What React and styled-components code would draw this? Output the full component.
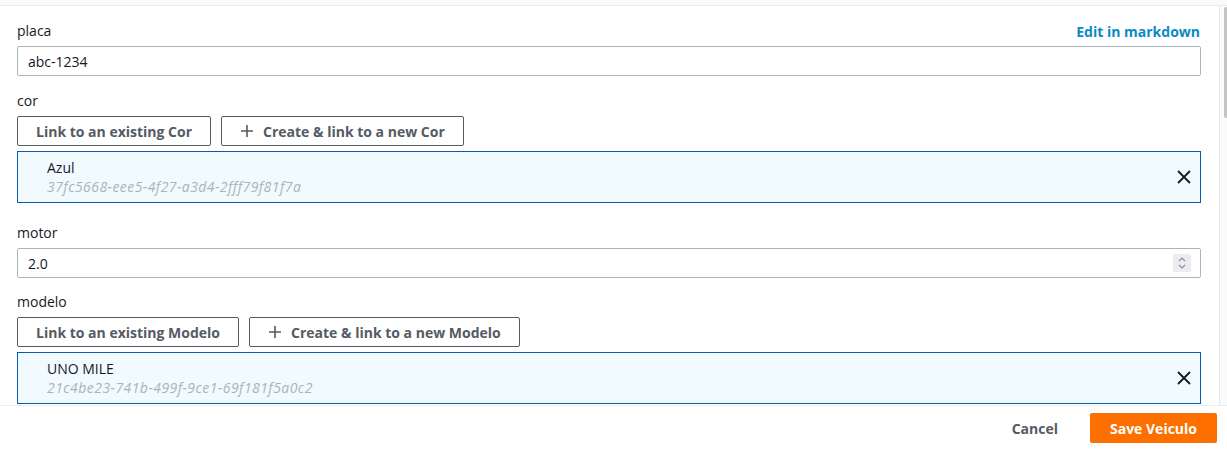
import React from "react";
import styled, { createGlobalStyle } from "styled-components";

const Global = createGlobalStyle`
  html, body { margin: 0; padding: 0; background: #fff; }
  body { font-family: "Open Sans", Roboto, Arial, sans-serif; color: #16191f; }
  * { box-sizing: border-box; }
`;

const Page = styled.div`
  width: 1227px;
  height: 453px;
  display: flex;
  flex-direction: column;
  overflow: hidden;
  background: #fff;
`;

const TopStrip = styled.div`
  height: 6px;
  flex: none;
  background: #fafafa;
  border-bottom: 1px solid #eaeded;
`;

const Middle = styled.div`
  height: 400px;
  flex: none;
  display: flex;
  border-bottom: 1px solid #eaeded;
`;

const FormArea = styled.div`
  flex: 1;
  overflow: hidden;
  padding: 16px 18px 0 17px;
  display: flex;
  flex-direction: column;
`;

const Rail = styled.div`
  width: 8px;
  flex: none;
  background: #fafafa;
  border-left: 1px solid #e6e6e6;
  display: flex;
  justify-content: flex-end;
  padding-top: 1px;
`;

const Thumb = styled.div`
  width: 3px;
  height: 111px;
  background: #c4c4c4;
  border-radius: 2px 0 0 2px;
`;

const Field = styled.div`
  display: flex;
  flex-direction: column;
  margin-bottom: ${(p) => p.$mb || 15}px;
`;

const LabelRow = styled.div`
  display: flex;
  justify-content: space-between;
  align-items: center;
  height: 18px;
  margin-bottom: 6px;
`;

const Label = styled.label`
  font-size: 14px;
  color: #16191f;
  line-height: 18px;
`;

const MarkdownLink = styled.a`
  font-size: 14px;
  font-weight: 700;
  color: #0a8bc4;
  text-decoration: none;
  margin-right: 1px;
`;

const InputBox = styled.div`
  height: 30px;
  border: 1px solid #aab7b8;
  border-radius: 2px;
  display: flex;
  align-items: center;
  padding: 0 9px 0 10px;
  font-size: 14px;
  color: #16191f;
`;

const InputText = styled.span`
  flex: 1;
`;

const Spinner = styled.div`
  width: 18px;
  height: 18px;
  background: #ebebf0;
  border-radius: 2px;
  display: flex;
  align-items: center;
  justify-content: center;
`;

const ButtonRow = styled.div`
  display: flex;
  gap: 10px;
  margin-bottom: 5px;
`;

const OutlineButton = styled.button`
  height: 30px;
  padding: 0 18px;
  border: 1px solid #545b64;
  border-radius: 2px;
  background: #fff;
  color: #545b64;
  font-family: inherit;
  font-size: 14px;
  font-weight: 700;
  display: flex;
  align-items: center;
  gap: 9px;
  cursor: pointer;
`;

const Card = styled.div`
  height: 52px;
  background: #f1faff;
  border: 1px solid #0a5bb0;
  display: flex;
  align-items: center;
  padding: 0 8px 0 29px;
`;

const CardText = styled.div`
  flex: 1;
  display: flex;
  flex-direction: column;
`;

const CardTitle = styled.div`
  font-size: 14px;
  line-height: 18px;
  color: #16191f;
`;

const CardId = styled.div`
  font-size: 14px;
  line-height: 19px;
  font-style: italic;
  letter-spacing: 0.45px;
  color: #a9b5b6;
`;

const Footer = styled.div`
  flex: 1;
  display: flex;
  align-items: center;
  justify-content: flex-end;
  padding: 0 10px 3px 0;
  gap: 24px;
`;

const CancelButton = styled.button`
  border: none;
  background: none;
  font-family: inherit;
  font-size: 14px;
  font-weight: 700;
  color: #545b64;
  padding: 0 8px;
  cursor: pointer;
`;

const PrimaryButton = styled.button`
  height: 30px;
  width: 127px;
  border: none;
  border-radius: 2px;
  background: #fd7000;
  color: #fff;
  font-family: inherit;
  font-size: 14px;
  font-weight: 700;
  cursor: pointer;
`;

const PlusIcon = () => (
  <svg width="14" height="14" viewBox="0 0 14 14">
    <path d="M7 1v12M1 7h12" stroke="#545b64" strokeWidth="1.6" fill="none" />
  </svg>
);

const CloseIcon = () => (
  <svg width="16" height="16" viewBox="0 0 16 16">
    <path d="M2 2l12 12M14 2L2 14" stroke="#16191f" strokeWidth="1.8" fill="none" />
  </svg>
);

const SpinIcon = () => (
  <svg width="10" height="14" viewBox="0 0 10 14">
    <path d="M2 5l3-3 3 3M2 9l3 3 3-3" stroke="#8d8d99" strokeWidth="1.2" fill="none" />
  </svg>
);

const LinkField = ({ label, entity, title, id, mb }) => (
  <Field $mb={mb}>
    <LabelRow>
      <Label>{label}</Label>
    </LabelRow>
    <ButtonRow>
      <OutlineButton>Link to an existing {entity}</OutlineButton>
      <OutlineButton>
        <PlusIcon />
        Create &amp; link to a new {entity}
      </OutlineButton>
    </ButtonRow>
    <Card>
      <CardText>
        <CardTitle>{title}</CardTitle>
        <CardId>{id}</CardId>
      </CardText>
      <CloseIcon />
    </Card>
  </Field>
);

export default function App() {
  return (
    <>
      <Global />
      <Page>
        <TopStrip />
        <Middle>
          <FormArea>
            <Field $mb={16}>
              <LabelRow>
                <Label>placa</Label>
                <MarkdownLink href="#">Edit in markdown</MarkdownLink>
              </LabelRow>
              <InputBox>
                <InputText>abc-1234</InputText>
              </InputBox>
            </Field>
            <LinkField
              label="cor"
              entity="Cor"
              title="Azul"
              id="37fc5668-eee5-4f27-a3d4-2fff79f81f7a"
              mb={21}
            />
            <Field $mb={15}>
              <LabelRow>
                <Label>motor</Label>
              </LabelRow>
              <InputBox>
                <InputText>2.0</InputText>
                <Spinner>
                  <SpinIcon />
                </Spinner>
              </InputBox>
            </Field>
            <LinkField
              label="modelo"
              entity="Modelo"
              title="UNO MILE"
              id="21c4be23-741b-499f-9ce1-69f181f5a0c2"
              mb={0}
            />
          </FormArea>
          <Rail>
            <Thumb />
          </Rail>
        </Middle>
        <Footer>
          <CancelButton>Cancel</CancelButton>
          <PrimaryButton>Save Veiculo</PrimaryButton>
        </Footer>
      </Page>
    </>
  );
}
